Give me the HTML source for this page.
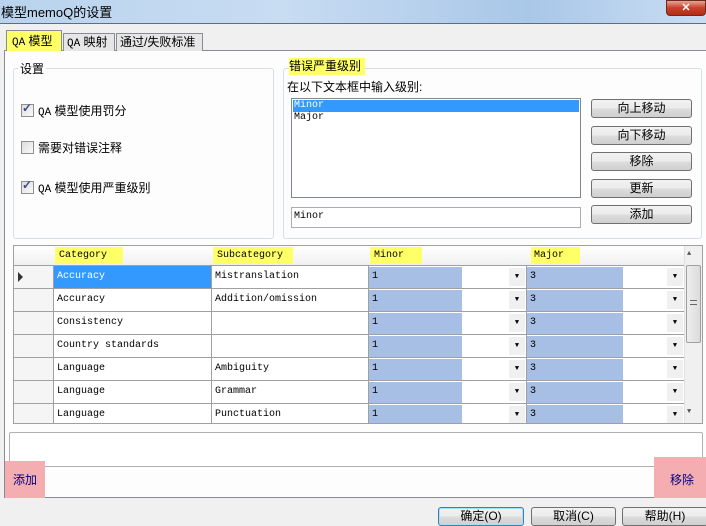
<!DOCTYPE html>
<html><head><meta charset="utf-8"><style>
*{box-sizing:border-box;margin:0;padding:0}
body{width:706px;height:526px;overflow:hidden;background:#f0f0f0;position:relative;font-family:"Liberation Mono","Noto Sans CJK SC",monospace;font-size:12px;color:#000}
.a{position:absolute}
.cjk{font-family:"Liberation Sans","Noto Sans CJK SC",sans-serif;font-size:12px}
.mono{font-family:"Liberation Mono","Noto Sans CJK SC",monospace;font-size:10px}
.btn{position:absolute;border:1px solid #707070;border-radius:3px;background:linear-gradient(#f2f2f2,#ebebeb 50%,#dddddd 51%,#cfcfcf);text-align:center;font-family:"Liberation Sans","Noto Sans CJK SC",sans-serif;font-size:12px;line-height:16px}
.cb{position:absolute;width:13px;height:13px;border:1px solid #8f8f8f;background:linear-gradient(135deg,#dcdcdc,#fafafa)}
.grp{position:absolute;border:1px solid #d5dfe5;border-radius:3px}
.hl{background:#ffff66}
.row{position:absolute;left:0;width:670px;height:23px;border-bottom:1px solid #a0a0a0}
.c{position:absolute;top:0;height:22px;line-height:22px;padding-left:3px;border-left:1px solid #a0a0a0}
.bl{position:absolute;background:#a7bfe4;top:1px;height:21px}
.dd{position:absolute;top:2px;width:16px;height:18px;background:#f0f0f0;font-size:7px;line-height:18px;text-align:center}
</style></head><body>
<div class="a" style="left:0;top:0;width:706px;height:24px;background:linear-gradient(90deg,#b9d3ee,#c8dcf2 40%,#a9c7e8 75%,#c9ddf3);border-bottom:1px solid #5a6e88"></div>
<div class="a cjk" style="left:1px;top:2px;font-size:13px">模型memoQ的设置</div>
<div class="a" style="left:666px;top:0;width:40px;height:16px;background:linear-gradient(#e8a496,#c7402a 50%,#b52b14);border:1px solid #6d2a1f;border-radius:0 0 4px 4px;color:#fff;text-align:center;font:bold 11px/14px 'Liberation Sans',sans-serif">✕</div>

<div class="a" style="left:4px;top:50px;width:702px;height:448px;background:#fdfdfd;border:1px solid #898c95;border-right:none"></div>
<div class="a cjk hl" style="left:6px;top:30px;width:56px;height:21px;border:1px solid #898c95;border-bottom:none;line-height:20px;padding-left:5px;font-size:12px"><span class="mono" style="font-size:11px">QA</span> 模型</div>
<div class="a cjk" style="left:63px;top:33px;width:52px;height:18px;border:1px solid #898c95;border-bottom:none;background:#e6e6e6;line-height:17px;padding-left:3px"><span class="mono" style="font-size:11px">QA</span> 映射</div>
<div class="a cjk" style="left:116px;top:33px;width:87px;height:18px;border:1px solid #898c95;border-bottom:none;background:#e6e6e6;line-height:17px;padding-left:3px">通过/失败标准</div>

<div class="grp" style="left:13px;top:68px;width:261px;height:171px"></div>
<div class="a cjk" style="left:18px;top:60px;background:#fdfdfd;padding:0 2px">设置</div>
<div class="cb" style="left:21px;top:104px"></div><div class="a" style="left:22px;top:101px;color:#3c4f8a;font:bold 12px sans-serif">✓</div>
<div class="a cjk" style="left:38px;top:102px"><span class="mono" style="font-size:11px">QA</span> 模型使用罚分</div>
<div class="cb" style="left:21px;top:141px"></div>
<div class="a cjk" style="left:38px;top:139px">需要对错误注释</div>
<div class="cb" style="left:21px;top:181px"></div><div class="a" style="left:22px;top:178px;color:#3c4f8a;font:bold 12px sans-serif">✓</div>
<div class="a cjk" style="left:38px;top:179px"><span class="mono" style="font-size:11px">QA</span> 模型使用严重级别</div>

<div class="grp" style="left:283px;top:68px;width:419px;height:171px"></div>
<div class="a cjk hl" style="left:289px;top:58px;width:76px;height:17px;line-height:17px">错误严重级别</div>
<div class="a cjk" style="left:287px;top:78px">在以下文本框中输入级别:</div>
<div class="a" style="left:291px;top:98px;width:290px;height:100px;border:1px solid #828790;background:#fff"></div>
<div class="a mono" style="left:293px;top:100px;width:286px;height:12px;background:#3399ff;color:#fff;line-height:12px;padding-left:1px">Minor</div>
<div class="a mono" style="left:294px;top:112px;line-height:12px">Major</div>
<div class="a" style="left:291px;top:207px;width:290px;height:21px;border:1px solid #abadb3;background:#fff"></div>
<div class="a mono" style="left:294px;top:210px;line-height:14px">Minor</div>
<div class="btn" style="left:591px;top:99px;width:101px;height:19px">向上移动</div>
<div class="btn" style="left:591px;top:126px;width:101px;height:19px">向下移动</div>
<div class="btn" style="left:591px;top:152px;width:101px;height:19px">移除</div>
<div class="btn" style="left:591px;top:179px;width:101px;height:19px">更新</div>
<div class="btn" style="left:591px;top:205px;width:101px;height:19px">添加</div>

<div class="a" style="left:13px;top:245px;width:690px;height:179px;border:1px solid #a0a0a0;background:#fff"></div>
<div class="a" style="left:14px;top:246px;width:670px;height:20px;background:linear-gradient(#fff,#f0f0f0);border-bottom:1px solid #a0a0a0"></div>
<div class="a mono hl" style="left:55px;top:247px;width:68px;height:17px;line-height:17px;padding-left:4px">Category</div>
<div class="a mono hl" style="left:213px;top:247px;width:80px;height:17px;line-height:17px;padding-left:4px">Subcategory</div>
<div class="a mono hl" style="left:370px;top:247px;width:52px;height:17px;line-height:17px;padding-left:4px">Minor</div>
<div class="a mono hl" style="left:531px;top:247px;width:49px;height:17px;line-height:17px;padding-left:3px">Major</div>
<div class="a" style="left:14px;top:266px;width:39px;height:157px;background:#f5f5f5"></div>

<div class="a" id="rows" style="left:14px;top:266px;width:670px;height:157px;overflow:hidden"></div>
<div class="a" style="left:18px;top:272px;width:0;height:0;border-left:5px solid #333;border-top:5px solid transparent;border-bottom:5px solid transparent"></div>
<script>
var d=[["Accuracy","Mistranslation"],["Accuracy","Addition/omission"],["Consistency",""],["Country standards",""],["Language","Ambiguity"],["Language","Grammar"],["Language","Punctuation"]];
var h="";d.forEach(function(r,i){var t=i*23;
h+='<div class="row mono" style="top:'+t+'px">'+
'<div class="c" style="left:39px;width:158px;'+(i==0?'background:#3399ff;color:#fff;':'')+'">'+r[0]+'</div>'+
'<div class="c" style="left:197px;width:157px">'+r[1]+'</div>'+
'<div class="c" style="left:354px;width:158px"><div class="bl" style="left:0;width:93px"></div><span style="position:relative">1</span><div class="dd" style="left:140px">▼</div></div>'+
'<div class="c" style="left:512px;width:158px"><div class="bl" style="left:0;width:96px"></div><span style="position:relative">3</span><div class="dd" style="left:140px">▼</div></div></div>';});
document.getElementById("rows").innerHTML=h;
</script>
<div class="a" style="left:684px;top:246px;width:18px;height:177px;background:#f0f0f0;border-left:1px solid #e0e0e0"></div>
<div class="a" style="left:687px;top:250px;font-size:7px;color:#555">▲</div>
<div class="a" style="left:686px;top:265px;width:15px;height:78px;border:1px solid #a0a0a0;border-radius:2px;background:linear-gradient(90deg,#eee,#dcdcdc)"></div>
<div class="a" style="left:690px;top:300px;width:7px;height:5px;border-top:1px solid #666;border-bottom:1px solid #666"></div>
<div class="a" style="left:687px;top:408px;font-size:7px;color:#555">▼</div>

<div class="a" style="left:9px;top:432px;width:694px;height:35px;border:1px solid #b0b0b0;border-radius:2px;background:#fff"></div>
<div class="a" style="left:5px;top:461px;width:40px;height:37px;background:#f4aeb1"></div>
<div class="a cjk" style="left:13px;top:471px;color:#000080">添加</div>
<div class="a" style="left:654px;top:457px;width:52px;height:41px;background:#f4aeb1"></div>
<div class="a cjk" style="left:670px;top:471px;color:#000080">移除</div>

<div class="btn" style="left:438px;top:507px;width:86px;height:19px;border-color:#3c7fb1;box-shadow:inset 0 0 0 1px #a6e0f6">确定(O)</div>
<div class="btn" style="left:531px;top:507px;width:85px;height:19px">取消(C)</div>
<div class="btn" style="left:622px;top:507px;width:86px;height:19px">帮助(H)</div>
</body></html>
